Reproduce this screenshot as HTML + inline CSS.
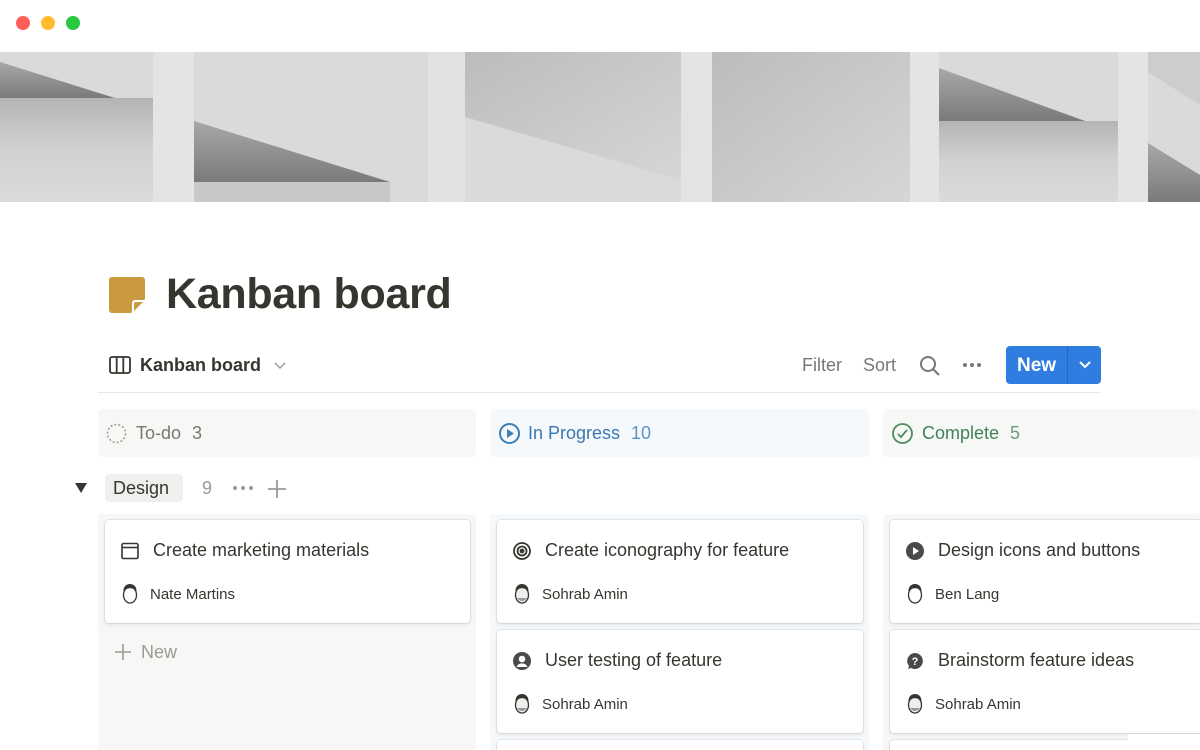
<!DOCTYPE html>
<html style="overflow:hidden;height:750px"><head><meta charset="utf-8"><style>
*{margin:0;padding:0;box-sizing:border-box}
body{width:1200px;height:750px;overflow:hidden;background:#fff;font-family:"Liberation Sans",sans-serif;color:#37352f;position:relative}
#w{position:absolute;left:0;top:0;width:1200px;height:750px;overflow:hidden}
.a{position:absolute}
.dot{position:absolute;top:16px;width:14px;height:14px;border-radius:50%}
.col{position:absolute;top:514px;height:236px;border-radius:4px 4px 0 0}
.card{position:absolute;background:#fff;border-radius:4px;box-shadow:0 0 0 1px rgba(15,15,15,.08),0 2px 4px rgba(15,15,15,.08);height:103px}
.ct{position:absolute;left:48px;top:20px;font-size:18px;color:#37352f;white-space:nowrap}
.ci{position:absolute;left:16px;top:22px;width:18px;height:18px}
.cp{position:absolute;left:45px;top:66px;font-size:15px;color:#37352f;white-space:nowrap}
.av{position:absolute;left:16px;top:63px;width:18px;height:22px}
.hd{position:absolute;top:409px;height:48px;border-radius:5px}
.hl{position:absolute;top:12px;font-size:18px;white-space:nowrap}
</style></head><body><div id="w">
<div class="dot" style="left:16px;background:#fe5f57"></div>
<div class="dot" style="left:41px;background:#febc2e"></div>
<div class="dot" style="left:66px;background:#28c840"></div>

<svg class="a" style="left:0;top:52px" width="1200" height="150" viewBox="0 52 1200 150">
<defs>
<linearGradient id="sh" x1="0" y1="0" x2="0" y2="1"><stop offset="0" stop-color="#a8a8a8"/><stop offset="1" stop-color="#7a7a7a"/></linearGradient>
<linearGradient id="lo" x1="0" y1="0" x2="0" y2="1"><stop offset="0" stop-color="#b4b4b4"/><stop offset=".5" stop-color="#d2d2d2"/><stop offset="1" stop-color="#dadada"/></linearGradient>
<linearGradient id="pn" x1="0" y1="0" x2="1" y2="1"><stop offset="0" stop-color="#bcbcbc"/><stop offset="1" stop-color="#d6d6d6"/></linearGradient>
</defs>
<rect x="0" y="52" width="1200" height="150" fill="#dadada"/>
<polygon points="0,62 115,98 0,98" fill="url(#sh)"/>
<rect x="0" y="98" width="153" height="104" fill="url(#lo)"/>
<rect x="153" y="52" width="41" height="150" fill="#e4e4e4"/>
<polygon points="194,121 390,182 194,182" fill="url(#sh)"/>
<rect x="194" y="182" width="196" height="20" fill="#c8c8c8"/>
<rect x="428" y="52" width="37" height="150" fill="#e2e2e2"/>
<polygon points="465,52 681,52 681,180 465,117" fill="url(#pn)"/>
<rect x="681" y="52" width="31" height="150" fill="#e3e3e3"/>
<rect x="712" y="52" width="198" height="150" fill="url(#pn)"/>
<rect x="910" y="52" width="29" height="150" fill="#e4e4e4"/>
<polygon points="939,68 1085,121 939,121" fill="url(#sh)"/>
<rect x="939" y="121" width="179" height="81" fill="url(#lo)"/>
<rect x="1118" y="52" width="30" height="150" fill="#e4e4e4"/>
<polygon points="1148,143 1200,175 1200,202 1148,202" fill="url(#sh)"/>
<polygon points="1148,72 1200,105 1200,52 1148,52" fill="#cdcdcd"/>
</svg>

<svg class="a" style="left:109px;top:277px" width="36" height="36" viewBox="0 0 36 36"><path d="M3 0h30a3 3 0 0 1 3 3v19l-14 14H3a3 3 0 0 1-3-3V3a3 3 0 0 1 3-3z" fill="#c99a3e"/><path d="M23 36V26a3 3 0 0 1 3-3h10z" fill="#fff"/><path d="M25 34v-7a2 2 0 0 1 2-2h7z" fill="#c99a3e"/></svg>
<div class="a" style="left:166px;top:270px;font-size:43px;font-weight:bold;letter-spacing:-.3px;color:#37352f">Kanban board</div>

<svg class="a" style="left:109px;top:356px" width="22" height="18" viewBox="0 0 22 18" fill="none" stroke="#37352f" stroke-width="1.8"><rect x="1" y="1" width="20" height="16" rx="2"/><path d="M7.7 1v16M14.3 1v16"/></svg>
<div class="a" style="left:140px;top:355px;font-size:18px;font-weight:bold">Kanban board</div>
<svg class="a" style="left:273px;top:361px" width="14" height="10" viewBox="0 0 14 10" fill="none" stroke="#9b9a97" stroke-width="1.5"><path d="M2 2l5 5 5-5"/></svg>

<div class="a" style="left:802px;top:355px;font-size:18px;color:#787774">Filter</div>
<div class="a" style="left:863px;top:355px;font-size:18px;color:#787774">Sort</div>
<svg class="a" style="left:919px;top:355px" width="22" height="22" viewBox="0 0 22 22" fill="none" stroke="#787774" stroke-width="2"><circle cx="9" cy="9" r="7"/><path d="M14 14l6 6"/></svg>
<svg class="a" style="left:962px;top:362px" width="20" height="6"><circle cx="3" cy="3" r="2" fill="#787774"/><circle cx="10" cy="3" r="2" fill="#787774"/><circle cx="17" cy="3" r="2" fill="#787774"/></svg>
<div class="a" style="left:1006px;top:346px;width:95px;height:38px;background:#2f7de1;border-radius:4px"></div>
<div class="a" style="left:1067px;top:346px;width:1px;height:38px;background:#2668bf"></div>
<div class="a" style="left:1017px;top:355px;font-size:19px;font-weight:bold;color:#fff">New</div>
<svg class="a" style="left:1078px;top:360px" width="14" height="10" viewBox="0 0 14 10" fill="none" stroke="#fff" stroke-width="2"><path d="M2 2l5 5 5-5"/></svg>
<div class="a" style="left:98px;top:392px;width:1003px;height:1px;background:#e9e9e7"></div>

<div class="hd" style="left:98px;width:378px;background:#f7f7f5"></div>
<svg class="a" style="left:106px;top:423px" width="21" height="21"><circle cx="10.5" cy="10.5" r="9" fill="none" stroke="#9b9a97" stroke-width="1.5" stroke-dasharray="2 2"/></svg>
<div class="a hl" style="left:136px;top:423px;color:#787774">To-do <span style="margin-left:6px">3</span></div>
<div class="hd" style="left:490px;width:379px;background:#f5f9fc"></div>
<svg class="a" style="left:498px;top:422px" width="23" height="23"><circle cx="11.5" cy="11.5" r="9.5" fill="none" stroke="#3c7fb5" stroke-width="2"/><path d="M9 7l7 4.5-7 4.5z" fill="#3c7fb5"/></svg>
<div class="a hl" style="left:528px;top:423px;color:#3a78b0">In Progress <span style="margin-left:6px;color:#5a94c4">10</span></div>
<div class="hd" style="left:883px;width:317px;background:#f6f8f6"></div>
<svg class="a" style="left:891px;top:422px" width="23" height="23" fill="none" stroke="#4f8a5f" stroke-width="1.8"><circle cx="11.5" cy="11.5" r="9.5"/><path d="M7 12l3 3 6-7"/></svg>
<div class="a hl" style="left:922px;top:423px;color:#44805a">Complete <span style="margin-left:6px;color:#6a9a78">5</span></div>

<svg class="a" style="left:74px;top:482px" width="14" height="12"><path d="M1 1h12L7 11z" fill="#37352f"/></svg>
<div class="a" style="left:105px;top:474px;width:78px;height:28px;background:#efefed;border-radius:4px"></div>
<div class="a" style="left:113px;top:478px;font-size:18px">Design</div>
<div class="a" style="left:202px;top:478px;font-size:18px;color:#9b9a97">9</div>
<svg class="a" style="left:232px;top:485px" width="22" height="6"><circle cx="3" cy="3" r="2" fill="#9b9a97"/><circle cx="11" cy="3" r="2" fill="#9b9a97"/><circle cx="19" cy="3" r="2" fill="#9b9a97"/></svg>
<svg class="a" style="left:267px;top:479px" width="20" height="20" stroke="#9b9a97" stroke-width="1.8"><path d="M10 1v18M1 10h18"/></svg>

<div class="col" style="left:98px;width:378px;background:#f7f7f5"></div>
<div class="col" style="left:490px;width:379px;background:#f5f9fc"></div>
<div class="col" style="left:883px;width:317px;background:#f6f8f6"></div>

<div class="card" style="left:105px;top:520px;width:365px">
<svg class="ci" viewBox="0 0 18 18" fill="none" stroke="#37352f" stroke-width="1.6"><rect x="1" y="1.5" width="16" height="15" rx="1.5"/><path d="M1 5.5h16"/></svg>
<div class="ct">Create marketing materials</div>
<svg class="av" viewBox="0 0 18 22"><ellipse cx="9" cy="12" rx="6.5" ry="8" fill="#fff" stroke="#37352f" stroke-width="1.3"/><path d="M2.5 9C2 3 6 1 9 1s7 2 6.5 8C14 5 11 6 9 5 7 6 4 5 2.5 9z" fill="#37352f"/></svg>
<div class="cp">Nate Martins</div></div>
<svg class="a" style="left:114px;top:643px" width="18" height="18" stroke="#9b9a97" stroke-width="1.6"><path d="M9 1v16M1 9h16"/></svg>
<div class="a" style="left:141px;top:642px;font-size:18px;color:#9b9a97">New</div>

<div class="card" style="left:497px;top:520px;width:366px">
<svg class="ci" viewBox="0 0 18 18" fill="none" stroke="#37352f" stroke-width="1.8"><circle cx="9" cy="9" r="8"/><circle cx="9" cy="9" r="4.5"/><circle cx="9" cy="9" r="1.5" fill="#37352f"/></svg>
<div class="ct">Create iconography for feature</div>
<svg class="av" viewBox="0 0 18 22"><ellipse cx="9" cy="12" rx="6.5" ry="8" fill="#eee" stroke="#37352f" stroke-width="1.3"/><path d="M2.5 9C2 3 6 1 9 1s7 2 6.5 8C14 5 11 6 9 5 7 6 4 5 2.5 9z" fill="#37352f"/><path d="M4 15q5 6 10 0" fill="#999"/></svg>
<div class="cp">Sohrab Amin</div></div>
<div class="card" style="left:497px;top:630px;width:366px">
<svg class="ci" viewBox="0 0 18 18"><circle cx="9" cy="9" r="9" fill="#4a4a48"/><circle cx="9" cy="7" r="3.3" fill="#fff"/><path d="M3.5 15a6 6 0 0 1 11 0z" fill="#fff"/></svg>
<div class="ct">User testing of feature</div>
<svg class="av" viewBox="0 0 18 22"><ellipse cx="9" cy="12" rx="6.5" ry="8" fill="#eee" stroke="#37352f" stroke-width="1.3"/><path d="M2.5 9C2 3 6 1 9 1s7 2 6.5 8C14 5 11 6 9 5 7 6 4 5 2.5 9z" fill="#37352f"/><path d="M4 15q5 6 10 0" fill="#999"/></svg>
<div class="cp">Sohrab Amin</div></div>
<div class="card" style="left:497px;top:740px;width:366px;height:10px;border-radius:4px 4px 0 0"></div>

<div class="card" style="left:890px;top:520px;width:310px;border-radius:4px 0 0 4px">
<svg class="ci" viewBox="0 0 18 18"><circle cx="9" cy="9" r="9" fill="#4a4a48"/><path d="M7 5l6 4-6 4z" fill="#fff"/></svg>
<div class="ct">Design icons and buttons</div>
<svg class="av" viewBox="0 0 18 22"><ellipse cx="9" cy="12" rx="6.5" ry="8" fill="#fff" stroke="#37352f" stroke-width="1.3"/><path d="M2.5 9C2 3 6 1 9 1s7 2 6.5 8C14 5 11 6 9 5 7 6 4 5 2.5 9z" fill="#37352f"/></svg>
<div class="cp">Ben Lang</div></div>
<div class="card" style="left:890px;top:630px;width:310px;border-radius:4px 0 0 4px">
<svg class="ci" viewBox="0 0 18 18"><path d="M9 1a8 8 0 1 1-4 15l-3 1 1-3A8 8 0 0 1 9 1z" fill="#4a4a48"/><text x="9" y="13" font-size="11" font-weight="bold" text-anchor="middle" fill="#fff" font-family="Liberation Sans">?</text></svg>
<div class="ct">Brainstorm feature ideas</div>
<svg class="av" viewBox="0 0 18 22"><ellipse cx="9" cy="12" rx="6.5" ry="8" fill="#eee" stroke="#37352f" stroke-width="1.3"/><path d="M2.5 9C2 3 6 1 9 1s7 2 6.5 8C14 5 11 6 9 5 7 6 4 5 2.5 9z" fill="#37352f"/><path d="M4 15q5 6 10 0" fill="#999"/></svg>
<div class="cp">Sohrab Amin</div></div>
<div class="card" style="left:890px;top:740px;width:310px;height:10px;border-radius:4px 0 0 0"></div>
<div class="a" style="left:1128px;top:734px;width:72px;height:16px;background:#fff"></div>
</div></body></html>
